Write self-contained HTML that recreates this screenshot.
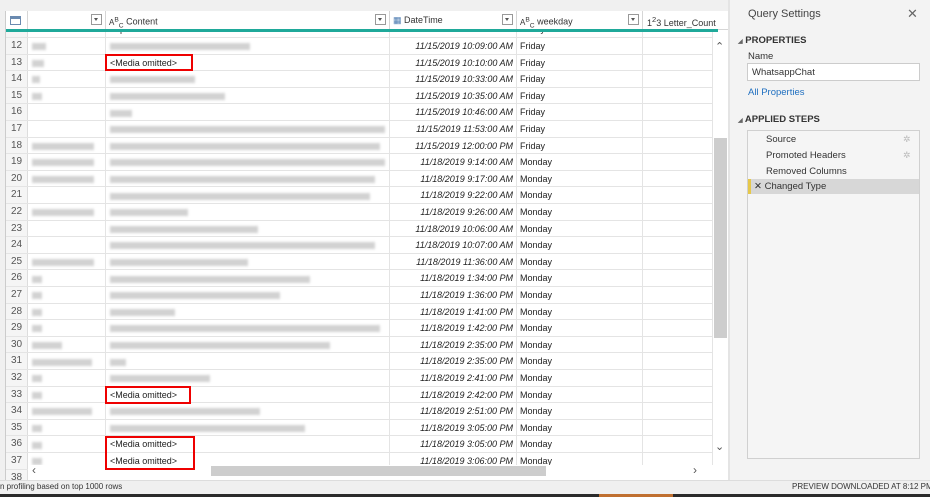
<!DOCTYPE html><html><head><style>
*{margin:0;padding:0;box-sizing:border-box}
body{width:930px;height:497px;overflow:hidden;background:#f0f0f0;font-family:"Liberation Sans",sans-serif;font-size:9px;color:#222;position:relative}
.abs{position:absolute}
#grid{left:5px;top:11px;width:723px;height:469px;background:#fff;border-left:1px solid #ccc;overflow:hidden}
.hdr{position:absolute;top:0;height:19px;border-right:1px solid #d6d6d6;border-bottom:1px solid #d6d6d6;background:#fff;font-size:9px;color:#333;line-height:18px}
.dd{position:absolute;right:3px;top:3px;width:11px;height:11px;border:1px solid #999;background:#fff}
.dd:after{content:"";position:absolute;left:2px;top:3px;border:2.5px solid transparent;border-top:3px solid #555}
.r{position:absolute;left:0;width:723px;height:16.6px;border-bottom:1px solid #e4e4e4;line-height:16px}
.n{position:absolute;left:0;width:22px;height:100%;background:#f5f5f5;border-right:1px solid #ddd;text-align:center;font-size:10px;color:#555}
.c{position:absolute;height:100%;border-right:1px solid #e4e4e4;white-space:nowrap;overflow:hidden}
.b{display:inline-block;height:7px;background:#d2d2d2;filter:blur(1.2px);vertical-align:middle}
.dt{left:384px;width:127px;text-align:right;padding-right:3px;font-style:italic}
.wd{left:511px;width:126px;padding-left:3px}
.lc{left:637px;width:70px}
.c1{left:22px;width:78px;padding-left:4px}
.c2{left:100px;width:284px;padding-left:4px}
.red{position:absolute;border:2px solid #e00;}
</style></head><body>
<div id="grid" class="abs">
<div class="hdr" style="left:0;width:22px;background:#fff"><div style="position:absolute;left:4px;top:5px;width:11px;height:9px;border:1px solid #6a8ab0;background:linear-gradient(#6a8ab0 0 2px,#fff 2px)"></div></div>
<div class="hdr" style="left:22px;width:78px"><div class="dd"></div></div>
<div class="hdr" style="left:100px;width:284px;padding-left:3px"><b style="font-weight:normal;font-size:8px">A<sup>B</sup><sub>C</sub></b> Content<div class="dd"></div></div>
<div class="hdr" style="left:384px;width:127px;padding-left:3px"><span style="color:#4a7ab0">▦</span> DateTime<div class="dd"></div></div>
<div class="hdr" style="left:511px;width:126px;padding-left:3px"><b style="font-weight:normal;font-size:8px">A<sup>B</sup><sub>C</sub></b> weekday<div class="dd"></div></div>
<div class="hdr" style="left:637px;width:86px;padding-left:4px">1<sup>2</sup>3 Letter_Count</div>
<div class="abs" style="left:0;top:21px;width:723px;height:448px;overflow:hidden">
<div style="position:absolute;top:-10.6px;left:0">
<div class="r" style="top:0"><div class="n">11</div><div class="c c1"></div><div class="c c2">https</div><div class="c dt">11/15/2019 10:05:00 AM</div><div class="c wd">Friday</div><div class="c lc"></div></div>
<div class="r" style="top:16.6px"><div class="n">12</div><div class="c c1"><span class="b" style="width:14px"></span></div><div class="c c2"><span class="b" style="width:140px"></span></div><div class="c dt">11/15/2019 10:09:00 AM</div><div class="c wd">Friday</div><div class="c lc"></div></div>
<div class="r" style="top:33.2px"><div class="n">13</div><div class="c c1"><span class="b" style="width:12px"></span></div><div class="c c2">&lt;Media omitted&gt;</div><div class="c dt">11/15/2019 10:10:00 AM</div><div class="c wd">Friday</div><div class="c lc"></div></div>
<div class="r" style="top:49.8px"><div class="n">14</div><div class="c c1"><span class="b" style="width:8px"></span></div><div class="c c2"><span class="b" style="width:85px"></span></div><div class="c dt">11/15/2019 10:33:00 AM</div><div class="c wd">Friday</div><div class="c lc"></div></div>
<div class="r" style="top:66.4px"><div class="n">15</div><div class="c c1"><span class="b" style="width:10px"></span></div><div class="c c2"><span class="b" style="width:115px"></span></div><div class="c dt">11/15/2019 10:35:00 AM</div><div class="c wd">Friday</div><div class="c lc"></div></div>
<div class="r" style="top:83px"><div class="n">16</div><div class="c c1"></div><div class="c c2"><span class="b" style="width:22px"></span></div><div class="c dt">11/15/2019 10:46:00 AM</div><div class="c wd">Friday</div><div class="c lc"></div></div>
<div class="r" style="top:99.6px"><div class="n">17</div><div class="c c1"></div><div class="c c2"><span class="b" style="width:275px"></span></div><div class="c dt">11/15/2019 11:53:00 AM</div><div class="c wd">Friday</div><div class="c lc"></div></div>
<div class="r" style="top:116.2px"><div class="n">18</div><div class="c c1"><span class="b" style="width:62px"></span></div><div class="c c2"><span class="b" style="width:270px"></span></div><div class="c dt">11/15/2019 12:00:00 PM</div><div class="c wd">Friday</div><div class="c lc"></div></div>
<div class="r" style="top:132.8px"><div class="n">19</div><div class="c c1"><span class="b" style="width:62px"></span></div><div class="c c2"><span class="b" style="width:275px"></span></div><div class="c dt">11/18/2019 9:14:00 AM</div><div class="c wd">Monday</div><div class="c lc"></div></div>
<div class="r" style="top:149.4px"><div class="n">20</div><div class="c c1"><span class="b" style="width:62px"></span></div><div class="c c2"><span class="b" style="width:265px"></span></div><div class="c dt">11/18/2019 9:17:00 AM</div><div class="c wd">Monday</div><div class="c lc"></div></div>
<div class="r" style="top:166px"><div class="n">21</div><div class="c c1"></div><div class="c c2"><span class="b" style="width:260px"></span></div><div class="c dt">11/18/2019 9:22:00 AM</div><div class="c wd">Monday</div><div class="c lc"></div></div>
<div class="r" style="top:182.6px"><div class="n">22</div><div class="c c1"><span class="b" style="width:62px"></span></div><div class="c c2"><span class="b" style="width:78px"></span></div><div class="c dt">11/18/2019 9:26:00 AM</div><div class="c wd">Monday</div><div class="c lc"></div></div>
<div class="r" style="top:199.2px"><div class="n">23</div><div class="c c1"></div><div class="c c2"><span class="b" style="width:148px"></span></div><div class="c dt">11/18/2019 10:06:00 AM</div><div class="c wd">Monday</div><div class="c lc"></div></div>
<div class="r" style="top:215.8px"><div class="n">24</div><div class="c c1"></div><div class="c c2"><span class="b" style="width:265px"></span></div><div class="c dt">11/18/2019 10:07:00 AM</div><div class="c wd">Monday</div><div class="c lc"></div></div>
<div class="r" style="top:232.4px"><div class="n">25</div><div class="c c1"><span class="b" style="width:62px"></span></div><div class="c c2"><span class="b" style="width:138px"></span></div><div class="c dt">11/18/2019 11:36:00 AM</div><div class="c wd">Monday</div><div class="c lc"></div></div>
<div class="r" style="top:249px"><div class="n">26</div><div class="c c1"><span class="b" style="width:10px"></span></div><div class="c c2"><span class="b" style="width:200px"></span></div><div class="c dt">11/18/2019 1:34:00 PM</div><div class="c wd">Monday</div><div class="c lc"></div></div>
<div class="r" style="top:265.6px"><div class="n">27</div><div class="c c1"><span class="b" style="width:10px"></span></div><div class="c c2"><span class="b" style="width:170px"></span></div><div class="c dt">11/18/2019 1:36:00 PM</div><div class="c wd">Monday</div><div class="c lc"></div></div>
<div class="r" style="top:282.2px"><div class="n">28</div><div class="c c1"><span class="b" style="width:10px"></span></div><div class="c c2"><span class="b" style="width:65px"></span></div><div class="c dt">11/18/2019 1:41:00 PM</div><div class="c wd">Monday</div><div class="c lc"></div></div>
<div class="r" style="top:298.8px"><div class="n">29</div><div class="c c1"><span class="b" style="width:10px"></span></div><div class="c c2"><span class="b" style="width:270px"></span></div><div class="c dt">11/18/2019 1:42:00 PM</div><div class="c wd">Monday</div><div class="c lc"></div></div>
<div class="r" style="top:315.4px"><div class="n">30</div><div class="c c1"><span class="b" style="width:30px"></span></div><div class="c c2"><span class="b" style="width:220px"></span></div><div class="c dt">11/18/2019 2:35:00 PM</div><div class="c wd">Monday</div><div class="c lc"></div></div>
<div class="r" style="top:332px"><div class="n">31</div><div class="c c1"><span class="b" style="width:60px"></span></div><div class="c c2"><span class="b" style="width:16px"></span></div><div class="c dt">11/18/2019 2:35:00 PM</div><div class="c wd">Monday</div><div class="c lc"></div></div>
<div class="r" style="top:348.6px"><div class="n">32</div><div class="c c1"><span class="b" style="width:10px"></span></div><div class="c c2"><span class="b" style="width:100px"></span></div><div class="c dt">11/18/2019 2:41:00 PM</div><div class="c wd">Monday</div><div class="c lc"></div></div>
<div class="r" style="top:365.2px"><div class="n">33</div><div class="c c1"><span class="b" style="width:10px"></span></div><div class="c c2">&lt;Media omitted&gt;</div><div class="c dt">11/18/2019 2:42:00 PM</div><div class="c wd">Monday</div><div class="c lc"></div></div>
<div class="r" style="top:381.8px"><div class="n">34</div><div class="c c1"><span class="b" style="width:60px"></span></div><div class="c c2"><span class="b" style="width:150px"></span></div><div class="c dt">11/18/2019 2:51:00 PM</div><div class="c wd">Monday</div><div class="c lc"></div></div>
<div class="r" style="top:398.4px"><div class="n">35</div><div class="c c1"><span class="b" style="width:10px"></span></div><div class="c c2"><span class="b" style="width:195px"></span></div><div class="c dt">11/18/2019 3:05:00 PM</div><div class="c wd">Monday</div><div class="c lc"></div></div>
<div class="r" style="top:415px"><div class="n">36</div><div class="c c1"><span class="b" style="width:10px"></span></div><div class="c c2">&lt;Media omitted&gt;</div><div class="c dt">11/18/2019 3:05:00 PM</div><div class="c wd">Monday</div><div class="c lc"></div></div>
<div class="r" style="top:431.6px"><div class="n">37</div><div class="c c1"><span class="b" style="width:10px"></span></div><div class="c c2">&lt;Media omitted&gt;</div><div class="c dt">11/18/2019 3:06:00 PM</div><div class="c wd">Monday</div><div class="c lc"></div></div>
<div class="r" style="top:448.2px"><div class="n">38</div></div>
</div></div>
<div class="abs" style="left:0;top:18px;width:712px;height:3px;background:#1fa99a"></div>
<div class="abs" style="left:707px;top:21px;width:16px;height:448px;background:#fff"></div>
<div class="abs" style="left:708px;top:127px;width:13px;height:200px;background:#cdcdcd"></div>
<div class="abs" style="left:709px;top:29px;font-size:11px;color:#555">&#8963;</div>
<div class="abs" style="left:709px;top:429px;font-size:11px;color:#555">&#8964;</div>
<div class="abs" style="left:22px;top:454px;width:685px;height:12px;background:#fff"></div>
<div class="abs" style="left:205px;top:455px;width:335px;height:10px;background:#cdcdcd"></div>
<div class="abs" style="left:26px;top:452px;font-size:12px;color:#555">‹</div>
<div class="abs" style="left:687px;top:452px;font-size:12px;color:#555">›</div>
</div>
<div class="red" style="left:105px;top:54px;width:88px;height:17px"></div>
<div class="red" style="left:105px;top:386px;width:86px;height:18px"></div>
<div class="red" style="left:105px;top:436px;width:90px;height:34px"></div>
<div class="abs" style="left:728px;top:0;width:2px;height:480px;background:#e4e4e4"></div>
<div class="abs" style="left:730px;top:0;width:200px;height:480px;background:#f3f3f3"></div>
<div class="abs" style="left:748px;top:8px;font-size:11px;color:#444">Query Settings</div>
<div class="abs" style="left:907px;top:6px;font-size:13px;color:#666">✕</div>
<div class="abs" style="left:738px;top:35px;font-size:9.5px;font-weight:bold;color:#333"><span style="font-size:6px;color:#666">◢</span> PROPERTIES</div>
<div class="abs" style="left:748px;top:51px;font-size:9.5px;color:#333">Name</div>
<div class="abs" style="left:747px;top:63px;width:173px;height:18px;background:#fff;border:1px solid #ccc;font-size:9.5px;padding:3px 4px;color:#333">WhatsappChat</div>
<div class="abs" style="left:748px;top:87px;font-size:9.5px;color:#1f6fc0">All Properties</div>
<div class="abs" style="left:738px;top:114px;font-size:9.5px;font-weight:bold;color:#333"><span style="font-size:6px;color:#666">◢</span> APPLIED STEPS</div>
<div class="abs" style="left:747px;top:130px;width:173px;height:329px;background:#f5f5f5;border:1px solid #d0d0d0"></div>
<div class="abs" style="left:766px;top:134px;font-size:9.5px;color:#333">Source</div>
<div class="abs" style="left:766px;top:150px;font-size:9.5px;color:#333">Promoted Headers</div>
<div class="abs" style="left:766px;top:166px;font-size:9.5px;color:#333">Removed Columns</div>
<div class="abs" style="left:903px;top:134px;font-size:9px;color:#bbb">✲</div>
<div class="abs" style="left:903px;top:150px;font-size:9px;color:#bbb">✲</div>
<div class="abs" style="left:748px;top:179px;width:171px;height:15px;background:#d7d7d7;border-left:3px solid #e6c84a"></div>
<div class="abs" style="left:754px;top:181px;font-size:9.5px;color:#333">✕ Changed Type</div>
<div class="abs" style="left:0;top:480px;width:930px;height:14px;background:#f0f0f0;border-top:1px solid #ddd"></div>
<div class="abs" style="left:0;top:482px;font-size:8px;color:#333">n profiling based on top 1000 rows</div>
<div class="abs" style="left:792px;top:482px;font-size:8px;color:#333;white-space:nowrap">PREVIEW DOWNLOADED AT 8:12 PM</div>
<div class="abs" style="left:0;top:494px;width:930px;height:3px;background:#2b2b2b"></div>
<div class="abs" style="left:599px;top:494px;width:74px;height:3px;background:#c07030"></div>
</body></html>
